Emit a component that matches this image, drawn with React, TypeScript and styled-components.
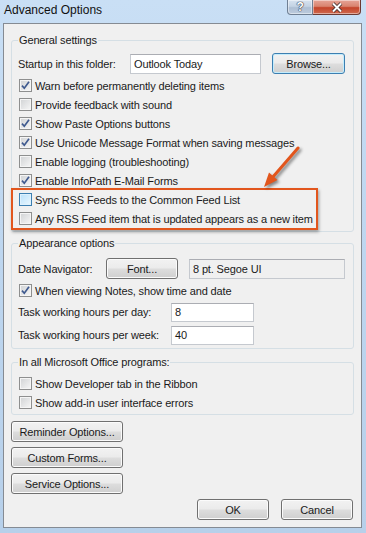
import styled, { createGlobalStyle } from 'styled-components'

const colors = {
  frameTop: '#c9dff5',
  frameBottom: '#b7d0ea',
  client: '#f0f0f0',
  clientBorder: '#858b93',
  groupBorder: '#d5dfe5',
  ink: '#1a1a1a',
  orange: '#e2561d',
};

const uiFont = `"Liberation Sans", Arial, sans-serif`;

const GlobalStyle = createGlobalStyle`
  html, body {
    margin: 0;
    padding: 0;
    background: ${colors.frameBottom};
  }
  * {
    box-sizing: border-box;
  }
`;

const Window = styled.div`
  position: relative;
  width: 366px;
  height: 533px;
  display: flex;
  flex-direction: column;
  background: linear-gradient(180deg, ${colors.frameTop} 0%, #bfd7f0 40%, ${colors.frameBottom} 100%);
  font-family: ${uiFont};
  font-size: 11px;
  letter-spacing: -0.14px;
  color: ${colors.ink};
  overflow: hidden;
`;

const TitleBar = styled.div`
  height: 23px;
  display: flex;
  align-items: flex-start;
  padding-left: 4px;
`;

const Title = styled.div`
  font-size: 12px;
  line-height: 15px;
  letter-spacing: 0;
  padding-top: 3px;
  color: #111;
`;

const Caption = styled.div`
  margin-left: auto;
  margin-right: 5px;
  display: flex;
`;

const CaptionButton = styled.div<{ $close?: boolean }>`
  width: ${(p) => (p.$close ? '48px' : '26px')};
  height: 15px;
  display: flex;
  align-items: center;
  justify-content: center;
  border: 1px solid ${(p) => (p.$close ? '#6b3a33' : '#6f7f93')};
  border-top: none;
  border-radius: ${(p) => (p.$close ? '0 0 4px 0' : '0 0 0 4px')};
  border-left: ${(p) => (p.$close ? 'none' : undefined)};
  background: ${(p) =>
    p.$close
      ? 'linear-gradient(180deg, #e6a497 0%, #d9846f 45%, #c4442a 55%, #cf6a4f 100%)'
      : 'linear-gradient(180deg, #d7e3f0 0%, #c4d3e4 45%, #aebfd4 55%, #bccbdd 100%)'};
  box-shadow: inset 0 0 0 1px rgba(255, 255, 255, 0.45);
  color: #fff;
  font-weight: 700;
  font-size: 12px;
  text-shadow: 0 0 1px #334, 0 0 1px #334, 0 0 1px #334;
`;

const Client = styled.div`
  flex: 1;
  margin: 0 4px 5px 3px;
  border: 1px solid ${colors.clientBorder};
  background: ${colors.client};
  padding: 9px 7px 7px;
  display: flex;
  flex-direction: column;
`;

const Group = styled.fieldset<{ $top?: number; $pt: number; $pb: number }>`
  margin: ${(p) => p.$top ?? 0}px 0 0;
  padding: ${(p) => p.$pt}px 6px ${(p) => p.$pb}px;
  border: 1px solid ${colors.groupBorder};
  border-radius: 3px;
  min-width: 0;
  display: flex;
  flex-direction: column;
`;

const Legend = styled.legend`
  padding: 0 1px;
  line-height: 14px;
  font-size: 11px;
  color: ${colors.ink};
`;

const FieldRow = styled.div<{ $mt?: number; $h?: number }>`
  display: flex;
  align-items: center;
  height: ${(p) => p.$h ?? 21}px;
  margin-top: ${(p) => p.$mt ?? 0}px;
`;

const Label = styled.span<{ $w: number }>`
  width: ${(p) => p.$w}px;
  flex: none;
  white-space: nowrap;
`;

const TextBox = styled.div<{ $w: number; $h?: number; $ml?: number; $readonly?: boolean }>`
  width: ${(p) => p.$w}px;
  height: ${(p) => p.$h ?? 20}px;
  margin-left: ${(p) => p.$ml ?? 0}px;
  flex: none;
  display: flex;
  align-items: center;
  padding-left: 3px;
  background: ${(p) => (p.$readonly ? colors.client : '#fff')};
  border: 1px solid #c5c9cf;
  border-top-color: #abadb3;
  white-space: nowrap;
`;

const Button = styled.div<{ $w: number; $ml?: number; $default?: boolean }>`
  width: ${(p) => p.$w}px;
  height: 21px;
  flex: none;
  margin-left: ${(p) => p.$ml ?? 0}px;
  display: flex;
  align-items: center;
  justify-content: center;
  border: 1px solid ${(p) => (p.$default ? '#3c7fb1' : '#707070')};
  border-radius: 3px;
  background: linear-gradient(180deg, #f2f2f2 0%, #ebebeb 48%, #dddddd 52%, #cfcfcf 100%);
  box-shadow: inset 0 0 0 1px ${(p) => (p.$default ? '#c4ecfc' : '#fbfbfb')};
  white-space: nowrap;
`;

const CheckList = styled.div<{ $mt?: number }>`
  display: flex;
  flex-direction: column;
  margin-top: ${(p) => p.$mt ?? 0}px;
`;

const CheckRow = styled.div`
  display: flex;
  align-items: center;
  gap: 3px;
  height: 19px;
  padding-left: 1px;
  white-space: nowrap;
`;

const Box = styled.span<{ $hot?: boolean }>`
  width: 13px;
  height: 13px;
  flex: none;
  display: flex;
  align-items: center;
  justify-content: center;
  border: 1px solid ${(p) => (p.$hot ? '#3c7fb1' : '#8e8f8f')};
  background: ${(p) =>
    p.$hot
      ? 'linear-gradient(135deg, #b9e1fb 0%, #eaf7fe 100%)'
      : 'linear-gradient(135deg, #d0d2d4 0%, #f7f7f7 100%)'};
  box-shadow: inset 0 0 0 1px ${(p) => (p.$hot ? '#def1fd' : '#f5f5f5')};
`;

const Highlight = styled.div`
  width: 307px;
  margin: -2px 0 0 -7px;
  padding-left: 5px;
  border: 2px solid ${colors.orange};
  box-shadow: 1px 2px 3px rgba(0, 0, 0, 0.35);
`;

const SideButtons = styled.div`
  display: flex;
  flex-direction: column;
  gap: 5px;
  margin-top: 6px;
`;

const Footer = styled.div`
  display: flex;
  justify-content: flex-end;
  gap: 12px;
  margin-top: 5px;
  padding-right: 1px;
`;

const Arrow = styled.svg`
  position: absolute;
  left: 0;
  top: 0;
  width: 366px;
  height: 533px;
  pointer-events: none;
  filter: drop-shadow(2px 2px 1.5px rgba(0, 0, 0, 0.45));
`;

function Check({ label, checked, hot }: { label: string; checked?: boolean; hot?: boolean }) {
  return (
    <CheckRow>
      <Box $hot={hot}>
        {checked && (
          <svg width="11" height="11" viewBox="0 0 11 11">
            <path d="M2 5.6 L4.3 8.2 L9 1.8" fill="none" stroke="#3f5a8f" strokeWidth="1.7" />
          </svg>
        )}
      </Box>
      <span>{label}</span>
    </CheckRow>
  );
}

function App() {
  return (
    <Window>
      <GlobalStyle />
      <TitleBar>
        <Title>Advanced Options</Title>
        <Caption>
          <CaptionButton>?</CaptionButton>
          <CaptionButton $close>
            <svg width="14" height="11" viewBox="0 0 14 11">
              <path d="M3 1.5 L11 9.5 M11 1.5 L3 9.5" stroke="#3b2a2a" strokeWidth="3.6" />
              <path d="M3 1.5 L11 9.5 M11 1.5 L3 9.5" stroke="#fff" strokeWidth="2" />
            </svg>
          </CaptionButton>
        </Caption>
      </TitleBar>

      <Client>
        <Group $pt={6} $pb={1}>
          <Legend>General settings</Legend>
          <FieldRow>
            <Label $w={112}>Startup in this folder:</Label>
            <TextBox $w={131}>Outlook Today</TextBox>
            <Button $w={73} $ml={11} $default>Browse...</Button>
          </FieldRow>
          <CheckList $mt={2}>
            <Check checked label="Warn before permanently deleting items" />
            <Check label="Provide feedback with sound" />
            <Check checked label="Show Paste Options buttons" />
            <Check checked label="Use Unicode Message Format when saving messages" />
            <Check label="Enable logging (troubleshooting)" />
            <Check checked label="Enable InfoPath E-Mail Forms" />
            <Highlight>
              <Check hot label="Sync RSS Feeds to the Common Feed List" />
              <Check label="Any RSS Feed item that is updated appears as a new item" />
            </Highlight>
          </CheckList>
        </Group>

        <Group $top={4} $pt={8} $pb={3}>
          <Legend>Appearance options</Legend>
          <FieldRow>
            <Label $w={88}>Date Navigator:</Label>
            <Button $w={72}>Font...</Button>
            <TextBox $w={156} $ml={11} $readonly>8 pt. Segoe UI</TextBox>
          </FieldRow>
          <CheckList $mt={2}>
            <Check checked label="When viewing Notes, show time and date" />
          </CheckList>
          <FieldRow $mt={2} $h={20}>
            <Label $w={153}>Task working hours per day:</Label>
            <TextBox $w={83} $h={19}>8</TextBox>
          </FieldRow>
          <FieldRow $mt={3} $h={20}>
            <Label $w={153}>Task working hours per week:</Label>
            <TextBox $w={83} $h={19}>40</TextBox>
          </FieldRow>
        </Group>

        <Group $top={6} $pt={5} $pb={2}>
          <Legend>In all Microsoft Office programs:</Legend>
          <CheckList>
            <Check label="Show Developer tab in the Ribbon" />
            <Check label="Show add-in user interface errors" />
          </CheckList>
        </Group>

        <SideButtons>
          <Button $w={112}>Reminder Options...</Button>
          <Button $w={112}>Custom Forms...</Button>
          <Button $w={112}>Service Options...</Button>
        </SideButtons>

        <Footer>
          <Button $w={72}>OK</Button>
          <Button $w={72}>Cancel</Button>
        </Footer>
      </Client>

      <Arrow viewBox="0 0 366 533">
        <line x1="298" y1="148" x2="272" y2="178" stroke={colors.orange} strokeWidth="3" strokeLinecap="round" />
        <polygon points="264,187 277.5,180 269,172.5" fill={colors.orange} />
      </Arrow>
    </Window>
  );
}

export default App
